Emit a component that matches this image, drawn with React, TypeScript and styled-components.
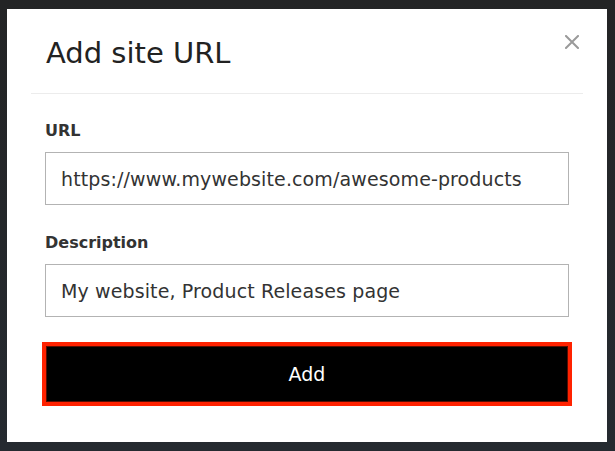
import styled, { createGlobalStyle } from 'styled-components';

const GlobalStyle = createGlobalStyle`
  * {
    box-sizing: border-box;
  }

  html,
  body {
    margin: 0;
    padding: 0;
    background: #242629;
    font-family: 'DejaVu Sans', 'Liberation Sans', sans-serif;
  }
`;

const CloseIcon = () => (
  <svg width="14" height="14" viewBox="0 0 14 14" aria-hidden="true">
    <path d="M1 1 L13 13 M13 1 L1 13" stroke="#9a9a9a" strokeWidth="2" strokeLinecap="square" />
  </svg>
);

const App = () => {
  return (
    <>
      <GlobalStyle />
      <Backdrop>
        <Modal role="dialog" aria-labelledby="add-site-title">
          <Header>
            <Title id="add-site-title">Add site URL</Title>
            <CloseButton type="button" aria-label="Close">
              <CloseIcon />
            </CloseButton>
          </Header>

          <Form onSubmit={(e) => e.preventDefault()}>
            <FormGroup>
              <Label htmlFor="site-url">URL</Label>
              <Input
                id="site-url"
                type="text"
                defaultValue="https://www.mywebsite.com/awesome-products"
              />
            </FormGroup>

            <FormGroup>
              <Label htmlFor="site-description">Description</Label>
              <Input
                id="site-description"
                type="text"
                defaultValue="My website, Product Releases page"
              />
            </FormGroup>

            <AddButton type="submit">Add</AddButton>
          </Form>
        </Modal>
      </Backdrop>
    </>
  );
};

export default App;

const Backdrop = styled.div`
  display: flex;
  align-items: flex-start;
  height: 451px;
  padding: 9px 8px 0 7px;
  background: linear-gradient(180deg, #232425 0%, #252a30 100%);
`;

const Modal = styled.div`
  display: flex;
  flex-direction: column;
  width: 600px;
  height: 433px;
  background: #ffffff;
`;

const Header = styled.div`
  display: flex;
  align-items: flex-start;
  justify-content: space-between;
  margin: 0 24px;
  padding: 26px 4px 22px 15px;
  border-bottom: 1px solid #ececec;
`;

const Title = styled.h2`
  margin: 0;
  font-size: 29px;
  line-height: 36px;
  font-weight: 400;
  color: #222222;
`;

const CloseButton = styled.button`
  display: flex;
  padding: 0;
  border: none;
  background: none;
  cursor: pointer;
`;

const Form = styled.form`
  display: flex;
  flex-direction: column;
  gap: 28px;
  padding: 27px 38px 0;
`;

const FormGroup = styled.div`
  display: flex;
  flex-direction: column;
  gap: 11px;
`;

const Label = styled.label`
  font-size: 16px;
  line-height: 20px;
  font-weight: 700;
  color: #333333;
`;

const Input = styled.input`
  height: 53px;
  padding: 0 15px;
  font-family: inherit;
  font-size: 19px;
  letter-spacing: 0.12px;
  color: #333333;
  background: #ffffff;
  border: 1px solid #b3b3b3;
  border-radius: 0;
  outline: none;
`;

const AddButton = styled.button`
  align-self: center;
  width: 522px;
  height: 56px;
  margin-top: 1px;
  font-family: inherit;
  font-size: 19px;
  color: #ffffff;
  background: #000000;
  border: 1px solid #5a0c00;
  outline: 4px solid #ff2200;
  cursor: pointer;
`;
